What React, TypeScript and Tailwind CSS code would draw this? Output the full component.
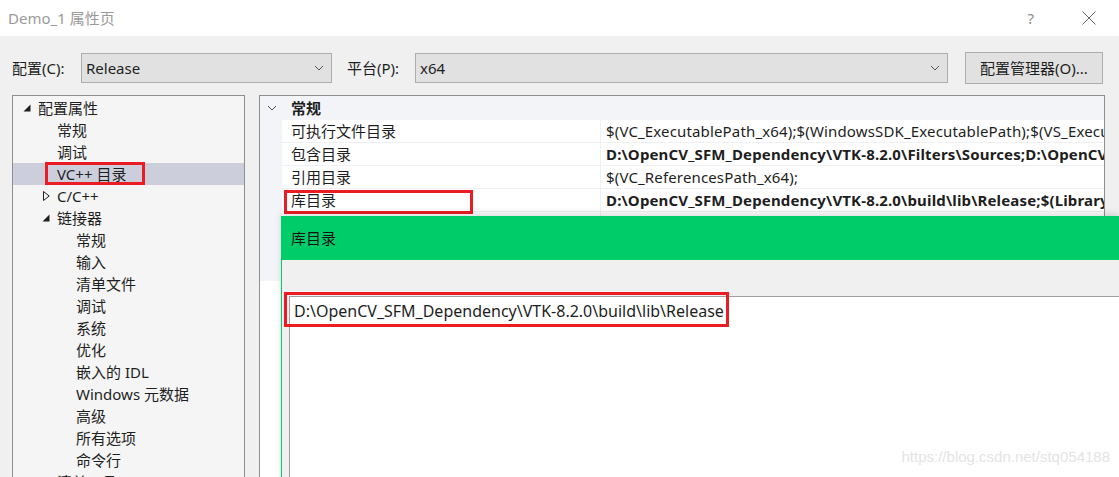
import React from "react";

const UI = { fontFamily: '"Noto Sans", "Noto Sans CJK SC", sans-serif' };

function ExpandedTri() {
  return (
    <svg width="8" height="8" viewBox="0 0 8 8" className="shrink-0">
      <polygon points="7.5,0.5 7.5,7.5 0.5,7.5" fill="#1e1e1e" />
    </svg>
  );
}
function CollapsedTri() {
  return (
    <svg width="7" height="10" viewBox="0 0 7 10" className="shrink-0">
      <polygon points="0.5,0.5 6.2,5 0.5,9.5" fill="none" stroke="#1e1e1e" strokeWidth="1" />
    </svg>
  );
}
function SmallChevron() {
  return (
    <svg width="10" height="6" viewBox="0 0 10 6">
      <polyline points="1,1 5,5 9,1" fill="none" stroke="#555" strokeWidth="1" />
    </svg>
  );
}

type TreeItem = { label: string; level: number; tri?: "open" | "closed"; selected?: boolean; boxed?: boolean };

const tree: TreeItem[] = [
  { label: "配置属性", level: 0, tri: "open" },
  { label: "常规", level: 1 },
  { label: "调试", level: 1 },
  { label: "VC++ 目录", level: 1, selected: true, boxed: true },
  { label: "C/C++", level: 1, tri: "closed" },
  { label: "链接器", level: 1, tri: "open" },
  { label: "常规", level: 2 },
  { label: "输入", level: 2 },
  { label: "清单文件", level: 2 },
  { label: "调试", level: 2 },
  { label: "系统", level: 2 },
  { label: "优化", level: 2 },
  { label: "嵌入的 IDL", level: 2 },
  { label: "Windows 元数据", level: 2 },
  { label: "高级", level: 2 },
  { label: "所有选项", level: 2 },
  { label: "命令行", level: 2 },
  { label: "清单工具", level: 1, tri: "closed" },
];

const textX = [38, 57, 76];

const rows: { name: string; value: string; bold?: boolean; boxed?: boolean }[] = [
  { name: "可执行文件目录", value: "$(VC_ExecutablePath_x64);$(WindowsSDK_ExecutablePath);$(VS_ExecutablePath);$(MSBuild_ExecutablePath)" },
  { name: "包含目录", value: "D:\\OpenCV_SFM_Dependency\\VTK-8.2.0\\Filters\\Sources;D:\\OpenCV_SFM_Dependency\\VTK-8.2.0", bold: true },
  { name: "引用目录", value: "$(VC_ReferencesPath_x64);" },
  { name: "库目录", value: "D:\\OpenCV_SFM_Dependency\\VTK-8.2.0\\build\\lib\\Release;$(LibraryPath)", bold: true, boxed: true },
  { name: "Windows 运行库目录", value: "$(WindowsSDK_MetadataPath);" },
  { name: "源目录", value: "$(VC_SourcePath);" },
  { name: "排除目录", value: "$(CommonExcludePath);$(VC_ExecutablePath_x64);$(VC_LibraryPath_x64)" },
];

export default function App() {
  return (
    <div className="relative w-[1119px] h-[477px] overflow-hidden bg-[#f0f0f0] text-[#1e1e1e]" style={UI}>
      {/* title bar */}
      <div className="h-[36px] bg-white flex items-center pl-[8px] pr-[23px]">
        <span className="text-[15px] text-[#9a9a9a]">Demo_1 属性页</span>
        <div className="flex-1" />
        <span className="text-[15px] text-[#8a8a8a] mr-[48px]">?</span>
        <svg width="14" height="14" viewBox="0 0 14 14">
          <line x1="0.5" y1="0.5" x2="13.5" y2="13.5" stroke="#666" strokeWidth="1" />
          <line x1="13.5" y1="0.5" x2="0.5" y2="13.5" stroke="#666" strokeWidth="1" />
        </svg>
      </div>

      {/* toolbar */}
      <div className="h-[59px] pt-[5px] flex items-center pl-[12px] text-[15px]">
        <span className="w-[69px]">配置(C):</span>
        <div className="w-[251px] h-[30px] border border-[#adadad] bg-[#e1e1e1] flex items-center pl-[4px] pr-[7px]">
          <span className="flex-1">Release</span>
          <SmallChevron />
        </div>
        <span className="w-[68px] ml-[15px]">平台(P):</span>
        <div className="w-[533px] h-[30px] border border-[#adadad] bg-[#e1e1e1] flex items-center pl-[4px] pr-[7px]">
          <span className="flex-1">x64</span>
          <SmallChevron />
        </div>
        <div className="ml-[17px] w-[138px] h-[32px] border border-[#adadad] bg-[#e1e1e1] flex items-center justify-center">
          配置管理器(O)...
        </div>
      </div>

      {/* panels */}
      <div className="flex pl-[12px]">
        {/* tree */}
        <div className="w-[233px] h-[420px] border border-[#8f8f8f] bg-[#f5f5f5] pt-[1px] text-[15px]">
          {tree.map((it, i) => (
            <div
              key={i}
              className={`relative h-[22px] flex items-center ${it.selected ? "bg-[#cccedb]" : ""}`}
            >
              {it.tri && (
                <div
                  className="absolute top-0 h-[22px] flex items-center"
                  style={{ left: textX[it.level] - 28 + (it.tri === "closed" ? 1 : 0) }}
                >
                  {it.tri === "open" ? <ExpandedTri /> : <CollapsedTri />}
                </div>
              )}
              <span className="whitespace-nowrap" style={{ marginLeft: textX[it.level] - 13 }}>
                {it.label}
              </span>
              {it.boxed && (
                <div className="absolute left-[32px] top-[-1px] w-[100px] h-[23px] border-[3px] border-[#ec1c24]" />
              )}
            </div>
          ))}
        </div>

        {/* property grid */}
        <div className="ml-[14px] w-[846px] h-[420px] border border-[#8f8f8f] bg-white text-[15px] overflow-hidden">
          <div className="h-[24px] flex items-center bg-[#f3f4f8]">
            <div className="w-[22px] flex justify-center pl-[1px]">
              <SmallChevron />
            </div>
            <span className="pl-[9px] font-bold">常规</span>
          </div>
          {rows.map((r, i) => (
            <div key={i} className="flex h-[23px]">
              <div className="w-[22px] bg-[#f3f4f8]" />
              <div className="relative w-[318px] pl-[9px] flex items-center border-b border-[#eef0f3] whitespace-nowrap">
                {r.name}
                {r.boxed && (
                  <div className="absolute left-[2px] top-[1px] w-[189px] h-[24px] border-[3px] border-[#ec1c24]" />
                )}
              </div>
              <div
                className={`flex-1 pl-[5px] flex items-center border-b border-l border-[#eef0f3] whitespace-nowrap overflow-hidden tracking-[0.15px] ${r.bold ? "font-bold" : ""}`}
              >
                {r.value}
              </div>
            </div>
          ))}
        </div>
      </div>

      {/* overlapping editor dialog */}
      <div className="absolute left-[281px] top-[216px] right-0 bottom-0 bg-[#f0f0f0] border-l border-[#00cc69] shadow-[0_-3px_6px_rgba(0,0,0,0.12)] flex flex-col">
        <div className="h-[44px] bg-[#00cc69] flex items-center pl-[9px] text-[15px] text-[#111]">库目录</div>
        <div className="h-[36px]" />
        <div className="flex-1 ml-[7px] bg-white border-t border-l border-[#a0a0a0] pl-[4px] pt-[2px] text-[16px]">
          <div className="relative inline-block">
            D:\OpenCV_SFM_Dependency\VTK-8.2.0\build\lib\Release
            <div className="absolute left-[-10px] top-[-7px] w-[445px] h-[35px] border-[3px] border-[#ec1c24]" />
          </div>
        </div>
      </div>

      {/* watermark */}
      <div
        className="absolute right-[9px] bottom-[9px] text-[15px] text-[#e4e4e4]"
        style={{ fontFamily: '"Liberation Sans", Arial, sans-serif' }}
      >
        https://blog.csdn.net/stq054188
      </div>
    </div>
  );
}
